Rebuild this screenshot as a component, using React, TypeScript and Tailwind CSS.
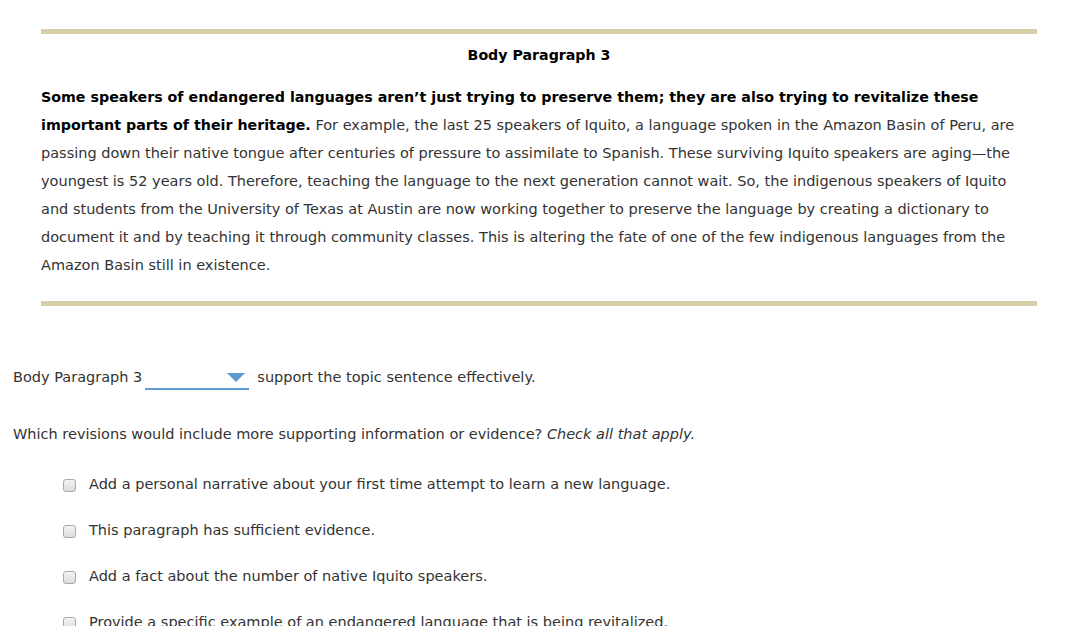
import React from "react";

const font = { fontFamily: '"DejaVu Sans", Verdana, sans-serif' };

function Box() {
  return (
    <span className="inline-block w-[13px] h-[13px] rounded-[3px] border border-[#a9a9a9] bg-gradient-to-b from-[#f4f4f4] to-[#dcdcdc] shrink-0" />
  );
}

export default function App() {
  const opts = [
    "Add a personal narrative about your first time attempt to learn a new language.",
    "This paragraph has sufficient evidence.",
    "Add a fact about the number of native Iquito speakers.",
    "Provide a specific example of an endangered language that is being revitalized.",
  ];
  return (
    <div className="w-[1065px] h-[626px] overflow-hidden bg-white text-[14.5px] text-[#333]" style={font}>
      <div className="pt-[29px] pl-[41px] w-[1037px]">
        <div className="h-[5px] bg-[#d8cfa6]" />
        <div className="mt-[11px] h-[20px] leading-[20px] text-center font-bold text-black text-[14.2px]">Body Paragraph 3</div>
        <p className="mt-[18px] leading-[28px]">
          <b className="text-black text-[14.24px]">
            Some speakers of endangered languages aren’t just trying to preserve them; they are also trying to revitalize these
            <br />
            important parts of their heritage.
          </b>{" "}
          For example, the last 25 speakers of Iquito, a language spoken in the Amazon Basin of Peru, are
          <br />
          passing down their native tongue after centuries of pressure to assimilate to Spanish. These surviving Iquito speakers are aging—the
          <br />
          youngest is 52 years old. Therefore, teaching the language to the next generation cannot wait. So, the indigenous speakers of Iquito
          <br />
          and students from the University of Texas at Austin are now working together to preserve the language by creating a dictionary to
          <br />
          document it and by teaching it through community classes. This is altering the fate of one of the few indigenous languages from the
          <br />
          Amazon Basin still in existence.
        </p>
        <div className="mt-[22px] h-[5px] bg-[#d8cfa6]" />
      </div>
      <div className="pl-[13px]">
        <div className="mt-[60px] h-[24px] flex items-center">
          <span>Body Paragraph 3</span>
          <span className="relative ml-[3px] w-[104px] h-[24px] border-b-2 border-[#5b9bd1]">
            <svg className="absolute right-[4px] top-[7px]" width="18" height="9" viewBox="0 0 18 9">
              <polygon points="0,0 18,0 9,9" fill="#5b9bd1" />
            </svg>
          </span>
          <span className="ml-[8px]">support the topic sentence effectively.</span>
        </div>
        <div className="mt-[34px] h-[20px] leading-[20px]">
          Which revisions would include more supporting information or evidence? <i>Check all that apply.</i>
        </div>
        <div className="mt-[31px] pl-[50px] flex flex-col gap-[26px]">
          {opts.map((o) => (
            <label key={o} className="flex items-center h-[20px] gap-[13px]">
              <Box />
              <span>{o}</span>
            </label>
          ))}
        </div>
      </div>
    </div>
  );
}
